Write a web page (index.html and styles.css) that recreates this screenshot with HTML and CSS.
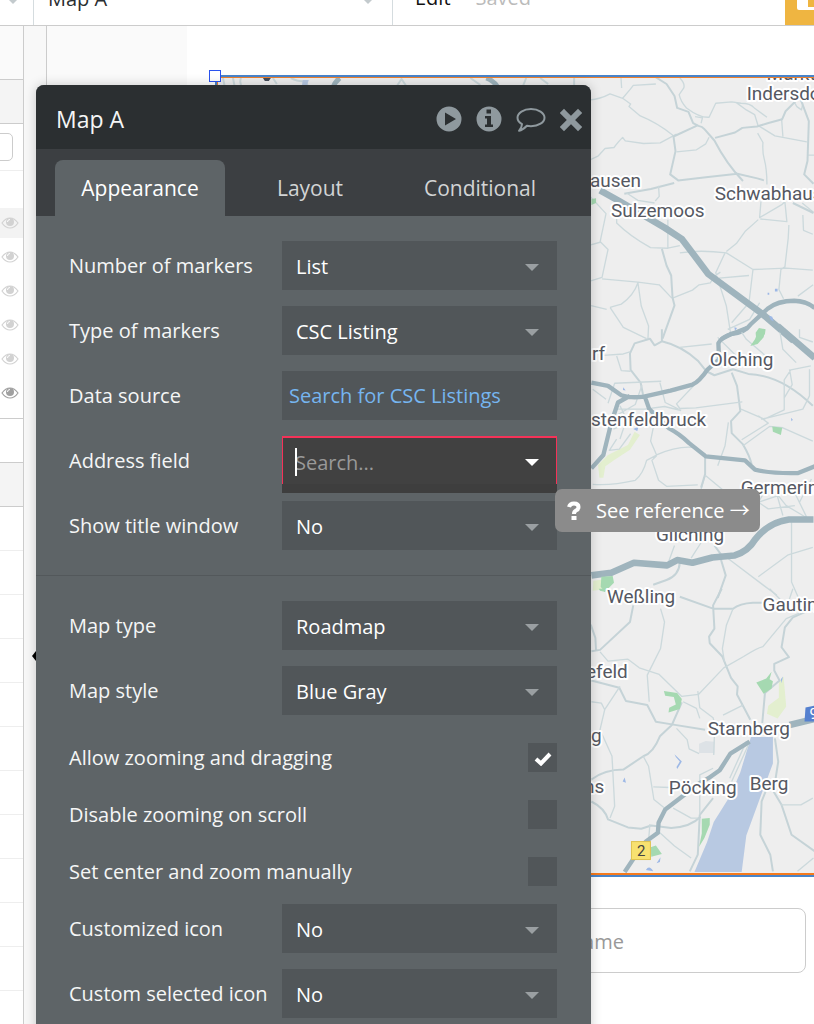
FILE: index.html
```
<!DOCTYPE html>
<html lang="en">
<head>
  <meta charset="utf-8">
  <title>Map A - Editor</title>
  <meta name="viewport" content="width=device-width, initial-scale=1.0">
  <link rel="stylesheet" href="styles.css">
</head>
<body>
  <!-- top bar -->
  <header class="topbar">
    <button class="picker picker-small" aria-label="Pages"><span class="caret-down"></span></button>
    <button class="picker picker-element">Map A<span class="caret-down"></span></button>
    <nav class="topbar-menu">
      <a class="menu-edit" href="#">Edit</a>
      <span class="menu-saved">Saved</span>
    </nav>
    <button class="gift" aria-label="Apps">
      <svg width="29" height="25" viewBox="0 0 29 25"><path d="M12 0V8q0 2 2 2H29V0z" fill="#fff"/><path d="M23 0h6v7h-6z" fill="#efb541"/></svg>
    </button>
  </header>

  <main class="workspace">
    <!-- element tree, mostly scrolled out to the left -->
    <aside class="tree">
      <div class="tree-top"></div>
      <div class="tree-head"></div>
      <div class="tree-search"><input type="text" aria-label="Search elements"></div>
      <div class="tree-items">
        <button class="eye selected" aria-label="Toggle element 1"><svg width="18" height="12" viewBox="0 0 18 12"><use href="#eye"/></svg></button>
        <button class="eye" aria-label="Toggle element 2"><svg width="18" height="12" viewBox="0 0 18 12"><use href="#eye"/></svg></button>
        <button class="eye" aria-label="Toggle element 3"><svg width="18" height="12" viewBox="0 0 18 12"><use href="#eye"/></svg></button>
        <button class="eye" aria-label="Toggle element 4"><svg width="18" height="12" viewBox="0 0 18 12"><use href="#eye"/></svg></button>
        <button class="eye" aria-label="Toggle element 5"><svg width="18" height="12" viewBox="0 0 18 12"><use href="#eye"/></svg></button>
        <button class="eye on" aria-label="Toggle element 6"><svg width="18" height="12" viewBox="0 0 18 12"><use href="#eye"/></svg></button>
      </div>
      <div class="tree-row strong"></div>
      <div class="tree-row strong shaded"></div>
      <div class="tree-row"></div>
      <div class="tree-row"></div>
      <div class="tree-row"></div>
      <div class="tree-row"></div>
      <div class="tree-row"></div>
      <div class="tree-row"></div>
      <div class="tree-row"></div>
      <div class="tree-row"></div>
      <div class="tree-row"></div>
      <div class="tree-row"></div>
      <div class="tree-row"></div>
    </aside>
    <div class="gutter"></div>

    <!-- canvas with the page being edited -->
    <section class="canvas">
      <div class="page">
        <div class="map-element">
          <span class="handle"></span>
          <svg class="map" viewBox="217 78 598 797" preserveAspectRatio="xMinYMin slice" role="img" aria-label="Map">
            <!-- behind the panel -->
            <g class="road road-strip">
              <path d="M222 78l2 10M232 78l2 10M240 78q-2 6 2 10M290 78q8 4 14 3l4 6M395 88l6-9 6 9"/>
              <path class="trunk" d="M339 78q-5 4-7 10M486 78q8 3 12 10"/>
              <path d="M272 78l4 6M470 78l10 7M522 88l4-10M540 78l8 6M574 78v8"/>
            </g>
            <path class="water" d="M302 80l6 0-2 6h-5z"/>

            <!-- north part -->
            <g class="road" transform="translate(580 70) scale(.3333)">
              <path d="M123 24l2 30M30 90q30-2 60-18l38 13 22-26 10-13 68-4M128 85l24 17-5 8 34 28q50 20 98 58M30 270l25-12 20-22 27-3q15-20 26-30l8 10 55 8 50-2 49-26M300 24q16 16 12 30l-14 20q5 22 22 40 40 30 68 28l20-42 48-4 28 4q28 0 40 14l38 28M470 98l30 22 25 14 10 32M534 166l52 32 96 18M606 146l4 54M534 190l16 28q-2 30 4 50 8 30 8 76M290 246l60-6 28-18 10-20M346 140l22 4-4 16M640 90l12 20 14 10 4-20M686 256h20"/>
              <path class="mid" d="M225 20l35 22 24 36 8 36 34 12 14 34 16 8q12 2 18 10l30 34q36 70 86 122M355 166l-74 34 6 44-16 70 24 18 90-10 88-10 60 14 20 6M283 340l-70 18-80 14M406 204l60-16 22-14 44-4 32-10 44-12 10-24 30-30M664 90l24 64-4 120-10 40 28 28"/>
              <path d="M236 348l2 32-12 14M264 450v86M110 440v20q40 40 102 74l52 2 36-8M30 380l48 52-18 86-28 8M60 516l24 24-18 84-34 10M66 628l108 10 64 8 38 40M174 640q-14 40-50 64l-34 10M174 640l10 70 22 60-2 40M90 714l40 60 70 34M300 550q60-10 140 0l80 50-12 100-52 60M436 550l-28 60 32 100 14 90M278 686l60-24 20-16 34-6q10-20 30-32M418 626l90-8M520 600l100-4 80 6M544 396l-4 48 68-40 8-8 6 60-80-8M536 450l-40 36-26 36-30 24M628 466l-2 40-10 86-12 8-6 60 14 28M670 436l2 46 28 12M668 400l34 28M140 370l34 22 50 8M655 680l46-34M540 700l-30 50-66 30M30 708l50 12"/>
              <path class="mid" d="M246 538l14 50 14 30 4 66 6 24-36 100M640 400l62 30"/>
              <path class="motorway" d="M60 362l54 30 140 82 52 34 80 106 160 118 96 82"/>
              <path class="trunk" d="M424 810l30-16q40-2 60-30l50-46q30-24 80-24 40 2 62 22"/>
              <path class="park" d="M528 790l10-14 20 4-2 14-12 18h-14zM34 388l14-2v14l-14 6z"/>
              <path class="water" d="M564 670l5 0v6h-5zM586 658l8 0v8h-8zM568 738l10 4 4 14-8-4zM464 774l8 2-6 8z"/>
            </g>

            <!-- middle part -->
            <g class="road" transform="translate(580 330) scale(.3333)">
              <path class="meadow" d="M54 408l30-30 60-30 20-40 16 10-30 44-46 30-28 20-6 34H58z"/>
              <path class="meadow" d="M40 756l30-4 2 30-34 4z"/>
              <path class="mid" d="M246 0v36l-22 12-14-20-46 14-14 30 2 50 30 38 8 40M246 36q60 14 110 60l24 30 24 12 56-18 46 14q100 4 194 96M456 130l16 40 10 76-28 30 2 36 34 34q20 34 26 60"/>
              <path d="M70 78l60-4 20-6M110 80l14 44 28 2M300 54l96-10M84 222l20-60 140-6M186 168l-20 58-90 52M240 160l16 60 40 20M250 190l40-6M360 150l-70 74 10 14 48-2 140-18M104 240l90 0 60-8 50 12M220 296l-8 40 18 42-30 16q-10 40-34 60-70 16-128 12M228 378q70-30 120-22l30 20M230 380l-14 14 20 60 24 18 94-4M446 280l-10 70-22 60M378 440l60 50M376 440l-12 40M484 240l70 30 60-28 0-90 20-30 60-12M630 120l8 46-24 40M690 120l0 80-20 40-106 26-20 4M490 350l80-58 40 4 90 40M486 332l80-50-30-22M600 0l10 60 40 40M480 0l20 30 70 60M414 24l60 60M660 0v24l40 14M110 330l-22 34 30-4 34-46M120 230l20 40-20 60M100 300l24-10M38 180l40 30M536 520l60-20 24 30 60 36M548 500l-12 20 30 20 80-10M590 490l20 70M640 480l44 90M660 520l36-70"/>
              <path class="mid" d="M376 384v52l-12 40M300 700q-2 40-40 54l-40 14M420 680l18 60-24 68M404 650l22 30"/>
              <path d="M284 650l-18 50M370 632l-36 56M446 690l106 80 40 30M536 744l90-66 74-22M636 580v180l20 46"/>
              <path class="trunk" d="M34 160l50 10 40 28q30 10 68 4l80-18 66-18q20-8 46-46l34-30-2-48q10-20 40-28l46-18M150 200l-36 20-20 60-24 98-36 40M194 200l14 40 60 58q30 16 60 44l50 40 118 12 30 28q50 12 130 10l50-20"/>
              <path class="motorway" d="M594 -10l112 96"/>
              <path class="motorway" d="M34 740l60-8 68-30 100 8 30-16 46 8 60-16 66-6q40-10 64-50 40-50 100-58h74"/>
              <path class="park" d="M536 4l20-4-4 24-18 20-22 6 14-20zM578 292l30 4-4 22-24-10zM64 744l34-2 4 20-28 28-12-16z"/>
              <path class="water" d="M130 174l7 10-8-2zM634 266l6 6-4 4zM160 300l16-8-4 14z"/>
            </g>

            <!-- south part -->
            <g class="road" transform="translate(580 590) scale(.3333)">
              <path class="lake" d="M514 446h66v80l-36 96-44 120-14 110H344l38-90 20-60 50-80 30-70z"/>
              <path class="meadow" d="M598 280l14-16 8 90-26 36-32-14 4-24 32-24z"/>
              <path class="town" d="M358 466l20-8 26 2v34h-46z"/>
              <path class="mid" d="M300 24l100 36 60 0q20-16 60-18h40M426 0l-26 50 4 70-16 24 2 20 38 40 26 64 20 26-2 24 40 76M700 60l-60 26-24 30-10 60 22 30-44 20v20l16 30-14 12-30 26-8 90M160 50l-10 50-90 84-26 4M34 276l84 22 20 40 64 12 26 50 48 8 100 16M34 574q40-30 96-30l60-40q30-10 50-60l36-34 30-68M34 640q40 20 50 54l60 24 40 4 30-10 60 8q60-4 88-34M48 188l-2-40-14-40"/>
              <path d="M242 60l12 40-12 80-40 80 6 80M60 190l24 28 60-6 34 26 60 20 68 66 50-6 76-80 60-34q40-26 58-30l70-84 38-16M460 60l-20 50-12 70 6 40M34 340l30 4 10 20-14 60 36 80 8 150-14 36M74 364l46-70M290 420l32 34 6 28 30 14M190 504l16 30 16 100 30 24M220 596l50 2M280 660l54 30 26 0M354 308l6 50 40 30 10 40M310 340l40 20 10 30M430 380l60-30M404 440l-2 60M500 460l-50 110M506 470l-50 110M240 734l44 40 50 36M210 708l-4 50M640 0l-20 60M570 0l60 60M654 850l48-40"/>
              <path class="mid" d="M586 450l10 70-14 90 24 40 30 90 70 50M566 590l-20 50-4 100 30 60 8 50M400 630l-40 50-6 120-24 50"/>
              <path d="M604 650l60 0 36-20M400 540l-40 20v120"/>
              <path class="trunk" d="M134 852l24-36 40-56 36-26 2-30 20-40 60-46 20-20 50-28 34-24 32-50 58-36"/>
              <path class="motorway" d="M630 410l74-18"/>
              <path class="park" d="M252 308l40 6 14 18-6 30-34 10 2-14 20-10-6-22-26-4zM530 282l30-12 16-20-6 22 10 6-4 22-24 16zM366 692l24-2v20l-16 40-16 26 8-40zM212 778l16-6 18 26-32 8zM56 0h18l2 10-16-4z"/>
              <path class="water" d="M284 498l22 22-14 22-2-6 10-16-12-14zM128 580l6-12 4 16zM198 846q10-16 22 4zM230 826l12-18-2 14zM604 272l6-8-4 20z"/>
            </g>

            <!-- place names -->
            <g class="place">
              <text x="767" y="80">Markt</text>
              <text x="747" y="100">Indersdorf</text>
              <text x="590" y="187">ausen</text>
              <text x="715" y="200">Schwabhausen</text>
              <text x="611" y="217">Sulzemoos</text>
              <text x="592" y="361">rf</text>
              <text x="710" y="367">Olching</text>
              <text x="591" y="427">stenfeldbruck</text>
              <text x="741" y="495">Germering</text>
              <text x="656" y="542">Gilching</text>
              <text x="607" y="604">Weßling</text>
              <text x="763" y="612">Gauting</text>
              <text x="586" y="680">efeld</text>
              <text x="708" y="737">Starnberg</text>
              <text x="591" y="744">g</text>
              <text x="584" y="795">ns</text>
              <text x="669" y="796">Pöcking</text>
              <text x="750" y="792">Berg</text>
            </g>
            <rect class="shield-yellow" x="631.500" y="843.500" width="19" height="18"/>
            <text class="shield-text" x="637" y="858">2</text>
            <path d="M806 709l10-2v16h-11z" fill="#5580cf"/>
            <text class="shield-text white" x="810" y="721">95</text>
            <path d="M262 78h8l-2 3h-4z" fill="#444b57"/>
          </svg>
        </div>
        <input class="name-input" type="text" placeholder="Name" aria-label="Name">
      </div>
    </section>

    <!-- property editor -->
    <section class="panel">
      <span class="panel-pointer"></span>
      <header class="panel-head">
        <h1>Map A</h1>
        <div class="panel-icons">
          <button aria-label="Preview">
            <svg width="26" height="26" viewBox="0 0 26 26"><path fill-rule="evenodd" d="M13 .500a12.500 12.500 0 1 0 0 25 12.500 12.500 0 0 0 0-25zM9 6.500l11 6.500-11 6.500z" fill="currentColor"/></svg>
          </button>
          <button aria-label="Info">
            <svg width="26" height="26" viewBox="0 0 26 26"><path fill-rule="evenodd" d="M13 .500a12.500 12.500 0 1 0 0 25 12.500 12.500 0 0 0 0-25zM10.500 3.500h4.500v4h-4.500zM9 10h6v8.500h2V21H9v-2.500h2v-6H9z" fill="currentColor"/></svg>
          </button>
          <button aria-label="Comments">
            <svg width="30" height="26" viewBox="0 0 30 26"><path d="M15 3C22.500 3 28.500 7 28.500 11.700S22.500 20.200 15 20.200c-1.500 0-2.800-.1-4.100-.4C8.500 22.300 6.300 24.200 3 24.800c1.700-1.900 2.900-3.600 3-6.600-2.700-1.700-4.500-3.700-4.500-6.500C1.500 7 7.500 3 15 3z" fill="none" stroke="currentColor" stroke-width="2" stroke-linejoin="round"/></svg>
          </button>
          <button aria-label="Close">
            <svg width="22" height="26" viewBox="0 0 22 26"><path d="M4 7l14 14M18 7L4 21" stroke="currentColor" stroke-width="6" stroke-linecap="square"/></svg>
          </button>
        </div>
      </header>
      <nav class="tabs">
        <button class="tab active">Appearance</button>
        <button class="tab">Layout</button>
        <button class="tab">Conditional</button>
      </nav>

      <div class="group">
        <div class="row">
          <label for="markers">Number of markers</label>
          <div class="field select"><select id="markers"><option>List</option></select></div>
        </div>
        <div class="row">
          <label for="type">Type of markers</label>
          <div class="field select"><select id="type"><option>CSC Listing</option></select></div>
        </div>
        <div class="row">
          <label for="source">Data source</label>
          <button id="source" class="field expression">Search for CSC Listings</button>
        </div>
        <div class="row">
          <label for="address">Address field</label>
          <div class="field combo">
            <input id="address" type="text" placeholder="Search...">
            <span class="text-cursor"></span>
            <div class="combo-list"></div>
            <a class="tooltip" href="#">
              <svg width="14" height="20" viewBox="0 0 14 20"><path d="M2 6Q3 2.500 7 2.500q4.500 0 4.500 3.500 0 2.500-2.500 3.500-2 1-2 3.500" fill="none" stroke="#fff" stroke-width="4"/><path d="M4.500 15h5v4h-5z" fill="#fff"/></svg>
              <span>See reference <span class="arrow">→</span></span>
            </a>
          </div>
        </div>
        <div class="row">
          <label for="title">Show title window</label>
          <div class="field select"><select id="title"><option>No</option></select></div>
        </div>
      </div>

      <div class="group second">
        <div class="row">
          <label for="maptype">Map type</label>
          <div class="field select"><select id="maptype"><option>Roadmap</option></select></div>
        </div>
        <div class="row">
          <label for="mapstyle">Map style</label>
          <div class="field select"><select id="mapstyle"><option>Blue Gray</option></select></div>
        </div>
        <div class="checks">
          <div class="row">
            <label for="zoom">Allow zooming and dragging</label>
            <div class="check"><input id="zoom" type="checkbox" checked>
              <svg width="18" height="14" viewBox="0 0 18 14"><path d="M2 7l5 4.500L16 2" fill="none" stroke="#fff" stroke-width="4"/></svg>
            </div>
          </div>
          <div class="row">
            <label for="scroll">Disable zooming on scroll</label>
            <div class="check"><input id="scroll" type="checkbox"></div>
          </div>
          <div class="row">
            <label for="center">Set center and zoom manually</label>
            <div class="check"><input id="center" type="checkbox"></div>
          </div>
        </div>
        <div class="row">
          <label for="icon">Customized icon</label>
          <div class="field select"><select id="icon"><option>No</option></select></div>
        </div>
        <div class="row">
          <label for="selicon">Custom selected icon</label>
          <div class="field select"><select id="selicon"><option>No</option></select></div>
        </div>
      </div>
    </section>
  </main>

  <!-- shared icon -->
  <svg class="defs" width="0" height="0">
    <symbol id="eye" viewBox="0 0 18 12">
      <path d="M1 6Q4.500 1 9 1t8 5q-3.500 5-8 5T1 6z" fill="none" stroke="currentColor" stroke-width="1.200"/>
      <circle cx="9" cy="5" r="4" fill="currentColor"/>
      <path d="M6.500 5Q6.500 2.500 9 2.500" fill="none" stroke="#fff"/>
    </symbol>
  </svg>
</body>
</html>
```
FILE: styles.css
```
/* reset & typography */
* {
  margin: 0;
  padding: 0;
  box-sizing: border-box;
}
body {
  height: 100vh;
  display: flex;
  flex-direction: column;
  overflow: hidden;
  background: #fff;
  color: #2b2f31;
  font-family: "Open Sans", sans-serif;
  font-size: 20px;
  line-height: 24px;
}
button,
input,
select {
  font: inherit;
  color: inherit;
  border: none;
  background: none;
}
button {
  cursor: pointer;
}
a {
  color: inherit;
  text-decoration: none;
}
.defs {
  position: absolute;
}

/* top bar */
.topbar {
  height: 26px;
  flex-shrink: 0;
  display: flex;
  align-items: stretch;
  overflow: hidden;
  border-bottom: 1px solid #ccc;
}
.picker {
  display: flex;
  align-items: flex-end;
  justify-content: space-between;
  border-right: 1px solid #d5dcdf;
  padding: 0 18px 14px 14px;
}
.picker-small {
  width: 34px;
  padding: 0 14px 14px 7px;
}
.picker-element {
  width: 359px;
}
.caret-down {
  border: 6px solid transparent;
  border-top-color: #c3cacd;
  border-bottom: none;
  margin-bottom: 7px;
}
.topbar-menu {
  flex: 1;
  display: flex;
  align-items: flex-end;
  gap: 25px;
  padding: 0 0 15px 22px;
}
.menu-edit {
  font-weight: 500;
  color: #111;
}
.menu-saved {
  color: #bbb;
}
.gift {
  width: 29px;
  background: #efb541;
}
.gift svg {
  display: block;
}

/* workspace */
.workspace {
  flex: 1;
  min-height: 0;
  display: flex;
  position: relative;
  overflow: hidden;
}
.tree {
  width: 24px;
  flex-shrink: 0;
  overflow: hidden;
  border-right: 1px solid #ccc;
}
.tree-top {
  height: 54px;
  background: #fafafa;
  border-bottom: 1px solid #ccc;
}
.tree-head {
  height: 44px;
  background: #f4f4f4;
  border-bottom: 1px solid #ccc;
}
.tree-search {
  height: 47px;
  display: flex;
  align-items: center;
  justify-content: flex-end;
  padding-right: 10px;
  border-bottom: 1px solid #eee;
}
.tree-search input {
  width: 160px;
  height: 28px;
  flex-shrink: 0;
  border: 1px solid #ccc;
  border-radius: 5px;
}
.tree-items {
  display: flex;
  flex-direction: column;
  gap: 4px;
  padding: 37px 0 10px;
  border-bottom: 1px solid #ccc;
}
.eye {
  height: 30px;
  padding: 0 4px 0 1px;
  color: #d2d2d2;
  text-align: left;
}
.eye svg {
  display: block;
}
.eye.selected {
  background: #f3f3f3;
}
.eye.on {
  color: #a0a0a0;
}
.tree-row {
  height: 44px;
  border-bottom: 1px solid #eee;
}
.tree-row.strong {
  border-color: #ccc;
}
.tree-row.shaded {
  background: #f4f4f4;
}
.gutter {
  width: 23px;
  flex-shrink: 0;
  background: #f8f8f8;
  border-right: 1px solid #ccc;
}

/* canvas */
.canvas {
  flex: 1;
  min-width: 0;
  overflow: hidden;
  background: #fafafa;
  padding-left: 140px;
}
.page {
  height: 100%;
  background: #fff;
  padding: 49px 0 0 28px;
}
.map-element {
  position: relative;
  height: 802px;
  border: 2px solid #4a84c8;
  border-right: none;
}
.map {
  display: block;
  width: 100%;
  height: 798px;
  background: #eeeeee;
  border-top: 1px solid #ee7f2b;
  border-bottom: 2px solid #f57a1c;
  border-left: 1px solid #ee7f2b;
}
.handle {
  position: absolute;
  top: -7px;
  left: -8px;
  width: 12px;
  height: 12px;
  background: #fff;
  border: 1px solid #2a52ee;
}
.name-input {
  display: block;
  width: calc(100% - 344px);
  height: 65px;
  margin: 31px 8px 0 auto;
  padding: 2px 16px 0;
  border: 1px solid #ccc;
  border-radius: 8px;
}
.name-input::placeholder {
  color: #999;
}

/* map drawing */
.road path {
  fill: none;
  stroke: #ccd9dc;
  stroke-width: 4;
  stroke-linejoin: round;
}
.road path.mid {
  stroke: #c5d3d7;
  stroke-width: 6;
}
.road path.trunk {
  stroke: #9fb4bd;
  stroke-width: 13;
}
.road path.motorway {
  stroke: #9fb4bd;
  stroke-width: 20;
}
.road-strip path {
  stroke-width: 2;
}
.road-strip path.trunk {
  stroke-width: 5;
}
.road path.park {
  fill: #a5d9b1;
  stroke: none;
}
.road path.meadow {
  fill: #e3efcf;
  stroke: none;
}
.road path.town {
  fill: #dde2e6;
  stroke: none;
}
.road path.lake,
.water {
  fill: #b8c9e2;
  stroke: none;
}
.road path.water {
  fill: #9db8e6;
  stroke: none;
}
.place text {
  font-family: Roboto, sans-serif;
  font-size: 19px;
  fill: #555862;
  stroke: #fff;
  stroke-width: 4px;
  stroke-linejoin: round;
  paint-order: stroke;
}
.shield-yellow {
  fill: #f8e170;
  stroke: #dfc24f;
}
.shield-text {
  font-family: Roboto, sans-serif;
  font-size: 15px;
  fill: #444;
}
.shield-text.white {
  fill: #fff;
}

/* property editor */
.panel {
  position: absolute;
  top: 59px;
  bottom: -60px;
  left: 36px;
  width: 555px;
  background: #5e6467;
  border-radius: 8px;
  box-shadow: 0 0 12px rgba(0, 0, 0, 0.2);
  color: #f5f6f6;
}
.panel-pointer {
  position: absolute;
  top: 566px;
  left: -4px;
  border: 5px solid transparent;
  border-right: 4px solid #000;
  border-left: none;
}
.panel-head {
  height: 64px;
  display: flex;
  align-items: center;
  justify-content: space-between;
  padding: 4px 9px 0 20px;
  background: #2b2f31;
  border-radius: 8px 8px 0 0;
}
.panel-head h1 {
  font-size: 23px;
  font-weight: 400;
}
.panel-icons {
  display: flex;
  align-items: center;
  gap: 14px;
  color: #8f999e;
}
.panel-icons svg {
  display: block;
}
.tabs {
  height: 67px;
  display: flex;
  align-items: stretch;
  background: #3c3f42;
  padding: 11px 19px 0;
}
.tab {
  width: 170px;
  border-radius: 8px 8px 0 0;
  font-size: 21px;
  color: #d2d4d5;
}
.tab.active {
  background: #5e6467;
  color: #fff;
}
.group {
  display: flex;
  flex-direction: column;
  gap: 16px;
  padding: 25px 34px 25px 33px;
}
.group.second {
  border-top: 1px solid #53585b;
}
.row {
  display: flex;
  align-items: center;
  justify-content: space-between;
}
.field {
  position: relative;
  width: 275px;
  height: 49px;
  background: #515659;
}
.select::after,
.combo::after {
  content: "";
  position: absolute;
  top: 23px;
  right: 18px;
  border: 7px solid transparent;
  border-top-color: #9a9fa2;
  border-bottom: none;
  pointer-events: none;
}
.select select {
  appearance: none;
  width: 100%;
  height: 100%;
  padding: 3px 40px 0 14px;
  color: #fff;
}
.expression {
  padding-left: 7px;
  text-align: left;
  color: #76b5f0;
}
.combo {
  background: #414141;
}
.combo::after {
  border-top-color: #fff;
}
.combo input {
  width: 100%;
  height: 100%;
  padding: 2px 40px 0 12px;
  border: 1px solid #f53258;
  border-top-width: 2px;
  border-bottom: none;
  outline: none;
}
.combo input::placeholder {
  color: #999;
}
.text-cursor {
  position: absolute;
  top: 12px;
  left: 13px;
  width: 2px;
  height: 28px;
  background: #fff;
}
.combo-list {
  position: absolute;
  top: 48px;
  left: 0;
  right: 0;
  height: 9px;
  background: #3e3e3e;
}
.tooltip {
  position: absolute;
  top: 53px;
  left: 273px;
  z-index: 1;
  height: 43px;
  display: flex;
  align-items: center;
  gap: 15px;
  padding: 0 10px 0 12px;
  border-radius: 7px;
  background: #8b8b8b;
  color: #fff;
  white-space: nowrap;
}
.arrow {
  font-family: "Noto Sans CJK SC", sans-serif;
}
.checks {
  display: flex;
  flex-direction: column;
  gap: 28px;
  padding: 12px 0 2px;
}
.check {
  position: relative;
  width: 29px;
  height: 29px;
}
.check input {
  appearance: none;
  display: block;
  width: 29px;
  height: 29px;
  background: #515659;
}
.check svg {
  position: absolute;
  top: 9px;
  left: 6px;
  pointer-events: none;
}
```
